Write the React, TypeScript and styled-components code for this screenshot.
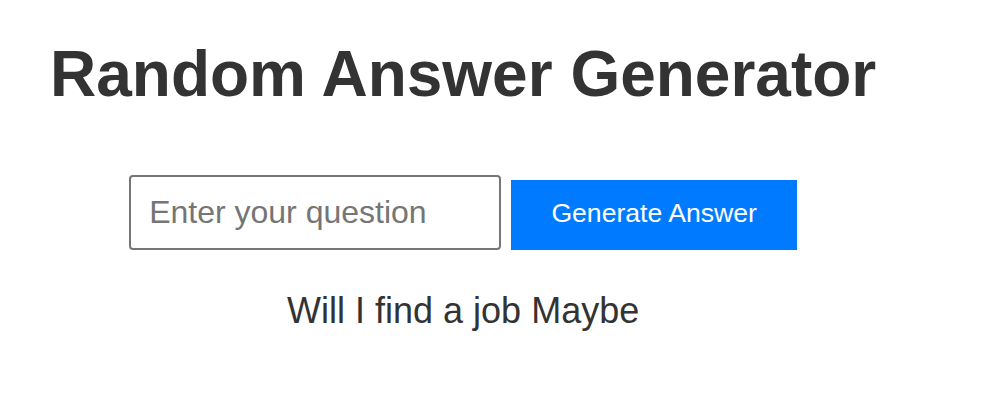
import { useState } from 'react';
import styled, { createGlobalStyle } from 'styled-components';

const GlobalStyle = createGlobalStyle`
  html, body {
    margin: 0;
    padding: 0;
    background: #ffffff;
    font-family: "Liberation Sans", Arial, sans-serif;
  }
`;

const Page = styled.div`
  padding: 37px 0 0 50px;
`;

const Content = styled.div`
  width: fit-content;
  display: flex;
  flex-direction: column;
`;

const Title = styled.h1`
  margin: 0;
  font-size: 64px;
  line-height: 74px;
  font-weight: 700;
  color: #333333;
`;

const Form = styled.div`
  margin-top: 64px;
  display: flex;
  justify-content: center;
  align-items: flex-end;
  gap: 10px;
`;

const QuestionInput = styled.input`
  box-sizing: border-box;
  width: 372px;
  height: 75px;
  padding: 0 18px;
  border: 2px solid #767676;
  border-radius: 4px;
  font-family: inherit;
  font-size: 32px;
  color: #333333;
  outline: none;

  &::placeholder {
    color: #757575;
  }
`;

const GenerateButton = styled.button`
  box-sizing: border-box;
  width: 286px;
  height: 70px;
  padding: 0 40px 4px;
  border: none;
  border-radius: 0;
  background: #007bff;
  color: #ffffff;
  font-family: inherit;
  font-size: 26.6px;
  cursor: pointer;
`;

const Answer = styled.p`
  margin: 40px 0 0;
  text-align: center;
  font-size: 36px;
  line-height: 42px;
  color: #333333;
`;

const answers = ['Yes', 'No', 'Maybe', 'Ask again later'];

const App = () => {
  const [question, setQuestion] = useState('');
  const [answer, setAnswer] = useState('Will I find a job Maybe');

  const generate = () => {
    const pick = answers[Math.floor(Math.random() * answers.length)];
    setAnswer(`${question} ${pick}`);
  };

  return (
    <>
      <GlobalStyle />
      <Page>
        <Content>
          <Title>Random Answer Generator</Title>
          <Form>
            <QuestionInput
              placeholder="Enter your question"
              value={question}
              onChange={(e) => setQuestion(e.target.value)}
            />
            <GenerateButton onClick={generate}>Generate Answer</GenerateButton>
          </Form>
          <Answer>{answer}</Answer>
        </Content>
      </Page>
    </>
  );
};

export default App;
